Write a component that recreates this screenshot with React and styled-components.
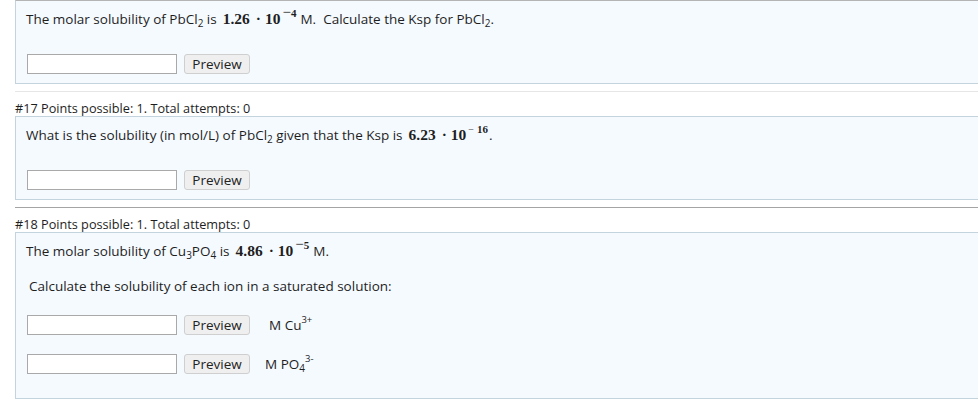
import React from "react"
import styled, { createGlobalStyle } from "styled-components"

const Global = createGlobalStyle`
  body {
    margin: 0;
    background: #fff;
    font-family: "Open Sans", "Liberation Sans", sans-serif;
    color: #1e1e1e;
    overflow: hidden;
  }
`

const Page = styled.div`
  padding-left: 15px;
`

const Rule = styled.div`
  height: 1px;
  margin-top: ${p => p.gap || 0}px;
  background: ${p => p.dark ? "#a4a4a4" : "#e6e6e6"};
`

const Header = styled.div`
  font-size: 12.7px;
  line-height: 16px;
  padding: 8px 0 0;
`

const Box = styled.div`
  width: calc(100% + 20px);
  box-sizing: border-box;
  background: #f5faff;
  border: 1px solid #c4d4de;
  border-top-color: ${p => p.topColor || "#c4d4de"};
  padding: 8px 10px 9px 10px;
  font-size: 13.5px;
`

const Line = styled.p`
  margin: 0;
  line-height: 20px;
  padding-left: ${p => p.indent || 0}px;
`

const Spacer = styled.div`
  height: ${p => p.h}px;
`

const Math = styled.span`
  font-family: "Liberation Serif", "DejaVu Serif", serif;
  font-weight: bold;
  font-size: 15.5px;
  margin: 0 ${p => p.tail}px 0 6px;
`

const Dot = styled.span`
  margin: 0 4px 0 6px;
`

const Sup = styled.sup`
  font-size: 11px;
  vertical-align: 7px;
  line-height: 0;
  margin-left: 2px;
`

const Minus = styled.span`
  font-weight: normal;
  font-size: ${p => p.size}px;
  margin-right: ${p => p.gap}px;
`

const Sub = styled.sub`
  font-size: 10px;
  vertical-align: -3px;
  line-height: 0;
`

const ChemSup = styled.sup`
  font-size: 9.5px;
  vertical-align: 7px;
  line-height: 0;
`

const Row = styled.div`
  display: flex;
  align-items: center;
  height: 20px;
  padding-left: 1px;
`

const Input = styled.input`
  width: 150px;
  height: 20px;
  box-sizing: border-box;
  border: 1px solid #a9a9a9;
  background: #fff;
  margin: 0;
  padding: 0 3px;
`

const Button = styled.button`
  margin-left: 7px;
  height: 20px;
  width: 66px;
  box-sizing: border-box;
  padding: 0;
  border: 1px solid #cfcfcf;
  border-radius: 3px;
  background: #efefef;
  font-family: "Open Sans", "Liberation Sans", sans-serif;
  font-size: 13.5px;
  color: #222;
  line-height: 18px;
`

const Unit = styled.span`
  margin-left: ${p => p.gap}px;
  font-size: 13.5px;
`

const Answer = ({ unit, gap }) => (
  <Row>
    <Input type="text" />
    <Button>Preview</Button>
    {unit && <Unit gap={gap}>{unit}</Unit>}
  </Row>
)

const Sci = ({ m, e, gap = 0, size = 15, tail = 4 }) => (
  <Math tail={tail}>
    {m}<Dot>·</Dot>10<Sup><Minus gap={gap} size={size}>−</Minus>{e}</Sup>
  </Math>
)

export default function App() {
  return (
    <Page>
      <Global />
      <Box topColor="#b4b4b4">
        <Line>
          The molar solubility of PbCl<Sub>2</Sub> is<Sci m="1.26" e="4" />M.&nbsp; Calculate the Ksp for PbCl<Sub>2</Sub>.
        </Line>
        <Spacer h={25} />
        <Answer />
      </Box>

      <Rule gap={7} />
      <Header>#17 Points possible: 1. Total attempts: 0</Header>
      <Box>
        <Line>
          What is the solubility (in mol/L) of PbCl<Sub>2</Sub> given that the Ksp is<Sci m="6.23" e="16" gap={3} size={10} tail={1} />.
        </Line>
        <Spacer h={25} />
        <Answer />
      </Box>

      <Rule dark gap={7} />
      <Header>#18 Points possible: 1. Total attempts: 0</Header>
      <Box>
        <Line>
          The molar solubility of Cu<Sub>3</Sub>PO<Sub>4</Sub> is<Sci m="4.86" e="5" />M.
        </Line>
        <Spacer h={15} />
        <Line indent={3}>Calculate the solubility of each ion in a saturated solution:</Line>
        <Spacer h={19} />
        <Answer unit={<>M Cu<ChemSup>3+</ChemSup></>} gap={19} />
        <Spacer h={19} />
        <Answer unit={<>M PO<Sub>4</Sub><ChemSup>3-</ChemSup></>} gap={15} />
        <Spacer h={15} />
      </Box>
    </Page>
  )
}
